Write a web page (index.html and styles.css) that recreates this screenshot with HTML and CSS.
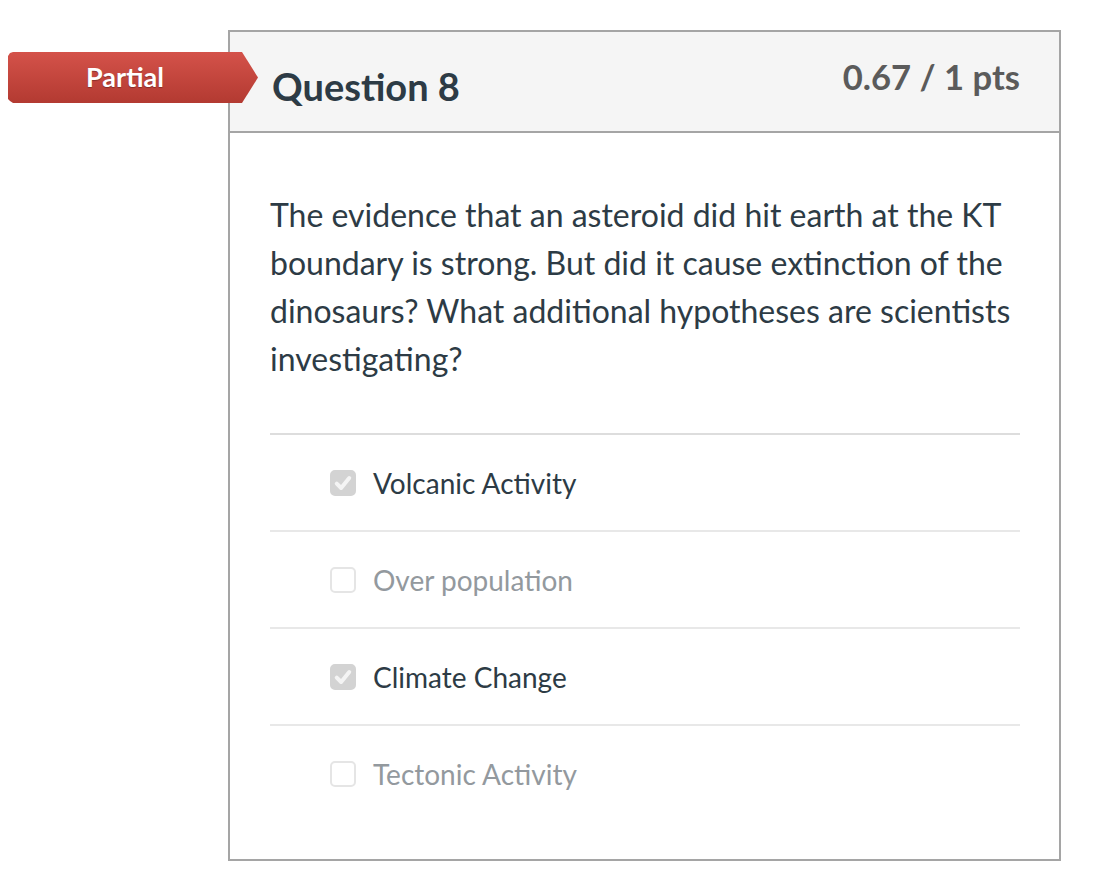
FILE: index.html
```html
<html>
    <head>
        <title>Question 8</title>
        <link rel="stylesheet" href="styles.css">
    </head>
    <body>
        <div class="question">
            <div class="header">
                <span class="badge">Partial</span>
                <h2 class="title">Question 8</h2>
                <div class="pts">0.67 / 1 pts</div>
            </div>
            <div class="content">
                <p class="text">The evidence that an asteroid did hit earth at the KT boundary is strong. But did it cause extinction of the dinosaurs? What additional hypotheses are scientists investigating?</p>
                <div class="answers">
                    <div class="answer selected">
                        <span class="box"><svg width="20" height="20" viewBox="0 0 16 16"><path d="M3 8.5 L6.5 12 L13 4" fill="none" stroke="#f4f4f4" stroke-width="3.2" stroke-linecap="round" stroke-linejoin="round"/></svg></span>
                        <span class="label">Volcanic Activity</span>
                    </div>
                    <div class="answer">
                        <span class="box"></span>
                        <span class="label">Over population</span>
                    </div>
                    <div class="answer selected">
                        <span class="box"><svg width="20" height="20" viewBox="0 0 16 16"><path d="M3 8.5 L6.5 12 L13 4" fill="none" stroke="#f4f4f4" stroke-width="3.2" stroke-linecap="round" stroke-linejoin="round"/></svg></span>
                        <span class="label">Climate Change</span>
                    </div>
                    <div class="answer">
                        <span class="box"></span>
                        <span class="label">Tectonic Activity</span>
                    </div>
                </div>
            </div>
        </div>
    </body>
</html>
```

FILE: styles.css
```css
body{
    margin: 0;
    background: #fff;
    font-family: Lato, "Open Sans", sans-serif;
    color: #2d3b45;
}

.question{
    margin: 30px 0 0 228px;
    width: 829px;
    height: 827px;
    border: 2px solid #a5a5a5;
}

.header{
    position: relative;
    display: flex;
    justify-content: space-between;
    align-items: flex-start;
    height: 99px;
    padding: 0 39px 0 42px;
    background: #f5f5f5;
    border-bottom: 2px solid #a5a5a5;
}

.badge{
    position: absolute;
    left: -222px;
    top: 20px;
    width: 234px;
    height: 51px;
    line-height: 50px;
    padding-right: 16px;
    text-align: center;
    color: #fff;
    font-size: 27px;
    font-weight: bold;
    background: linear-gradient(#d4524a, #b33a31);
    clip-path: polygon(0 4px, 2px 1px, 5px 0, 234px 0, 250px 50%, 234px 100%, 5px 100%, 2px 49px, 0 47px);
    text-shadow: 0 1px 1px rgba(0,0,0,0.3);
}

.title{
    margin: 31px 0 0;
    font-size: 38px;
    font-weight: bold;
    line-height: 46px;
}

.pts{
    margin-top: 25px;
    font-size: 34.6px;
    font-weight: bold;
    line-height: 40px;
    color: #5b5b5b;
}

.content{
    padding: 0 39px 0 40px;
}

.text{
    margin: 58px 0 0;
    font-size: 32px;
    line-height: 48px;
}

.answers{
    margin-top: 50px;
    border-top: 2px solid #ddd;
}

.answer{
    display: flex;
    align-items: center;
    height: 95px;
    padding-left: 60px;
    border-bottom: 2px solid #e8e8e8;
}

.answer:last-child{
    border-bottom: none;
}

.box{
    display: flex;
    align-items: center;
    justify-content: center;
    box-sizing: border-box;
    width: 26px;
    height: 26px;
    margin-right: 17px;
    border: 2px solid #e5e5e5;
    border-radius: 5px;
    background: #fff;
}

.selected .box{
    border-color: #d3d3d3;
    background: #d3d3d3;
}

.label{
    font-size: 28px;
    color: #93999e;
}

.selected .label{
    color: #2d3b45;
}
```
